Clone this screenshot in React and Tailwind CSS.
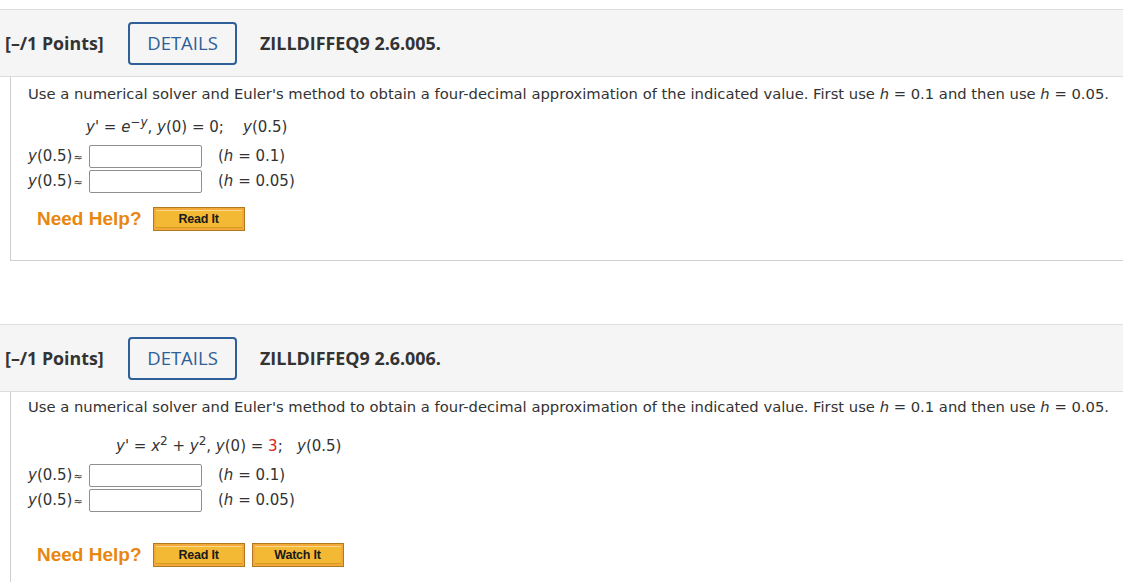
import React from "react";

function Header({ code }) {
    return (
        <div className="h-[68px] bg-[#f5f5f5] border-y border-[#dcdcdc] flex items-center font-['Open_Sans',sans-serif] text-[#333]">
            <div className="pl-[5px] w-[128px] font-bold text-[17.8px]">[–/1 Points]</div>
            <div className="w-[109px] h-[43px] border-2 border-[#2f5f98] rounded-[4px] flex items-center justify-center text-[18.5px] text-[#2f5f98]">
                DETAILS
            </div>
            <div className="ml-[23px] font-bold text-[17.9px]">{code}</div>
        </div>
    );
}

function AnswerRow({ h }) {
    return (
        <div className="flex items-center h-[25px]">
            <span className="w-[61px] text-[15px] whitespace-nowrap">
                <i>y</i>(0.5)<span className="text-[11px] ml-[1px]">≈</span>
            </span>
            <div className="w-[113px] h-[23px] border border-[#8f8f8f] rounded-[2px] bg-white" />
            <span className="ml-[16px] text-[15px]">
                (<i>h</i> = {h})
            </span>
        </div>
    );
}

function HelpButton({ label }) {
    return (
        <div className="w-[92px] h-[24px] border border-[#b27a1e] bg-[#f2a93a] p-[2px]">
            <div className="w-full h-full bg-[#f3b935] border-t border-[#f9d98a] border-b border-b-[#d69a22] flex items-center justify-center font-['Liberation_Sans',Arial,sans-serif] font-bold text-[12.5px] tracking-[-0.2px] text-[#1a1a1a]">
                {label}
            </div>
        </div>
    );
}

function Help({ watch }) {
    return (
        <div className="flex items-center gap-[11px] pl-[9px]">
            <span className="font-['Liberation_Sans',Arial,sans-serif] font-bold text-[19px] text-[#e8870f]">Need Help?</span>
            <div className="flex gap-[7px]">
                <HelpButton label="Read It" />
                {watch && <HelpButton label="Watch It" />}
            </div>
        </div>
    );
}

function Question() {
    return (
        <div className="text-[14.75px] leading-[22px] whitespace-nowrap">
            Use a numerical solver and Euler's method to obtain a four-decimal approximation of the indicated value. First use <i>h</i> = 0.1 and then use <i>h</i> = 0.05.
        </div>
    );
}

export default function App() {
    return (
        <div className="w-[1123px] h-[582px] overflow-hidden bg-white">
            <div className="h-[9px]" />
            <Header code="ZILLDIFFEQ9 2.6.005." />
            <div className="ml-[10px] w-[1200px] h-[184px] border-l border-b border-[#cfcfcf] pl-[17px] pt-[6px] font-['DejaVu_Sans',sans-serif] text-[#333]">
                <Question />
                <div className="ml-[58px] mt-[11px] text-[15px] leading-[22px] whitespace-nowrap">
                    <i>y</i>' = <i>e</i><sup className="text-[12px]">−<i>y</i></sup>, <i>y</i>(0) = 0;&nbsp;&nbsp;&nbsp; <i>y</i>(0.5)
                </div>
                <div className="mt-[6px]">
                    <AnswerRow h="0.1" />
                    <AnswerRow h="0.05" />
                </div>
                <div className="mt-[11px]">
                    <Help />
                </div>
            </div>
            <div className="h-[63px]" />
            <Header code="ZILLDIFFEQ9 2.6.006." />
            <div className="ml-[10px] w-[1200px] h-[200px] border-l border-[#cfcfcf] pl-[17px] pt-[4px] font-['DejaVu_Sans',sans-serif] text-[#333]">
                <Question />
                <div className="ml-[88px] mt-[17px] text-[15px] leading-[22px] whitespace-nowrap">
                    <i>y</i>' = <i>x</i><sup className="text-[12px]">2</sup> + <i>y</i><sup className="text-[12px]">2</sup>, <i>y</i>(0) = <span className="text-[#e0201b]">3</span>;&nbsp;&nbsp; <i>y</i>(0.5)
                </div>
                <div className="mt-[6px]">
                    <AnswerRow h="0.1" />
                    <AnswerRow h="0.05" />
                </div>
                <div className="mt-[28px]">
                    <Help watch />
                </div>
            </div>
        </div>
    );
}
